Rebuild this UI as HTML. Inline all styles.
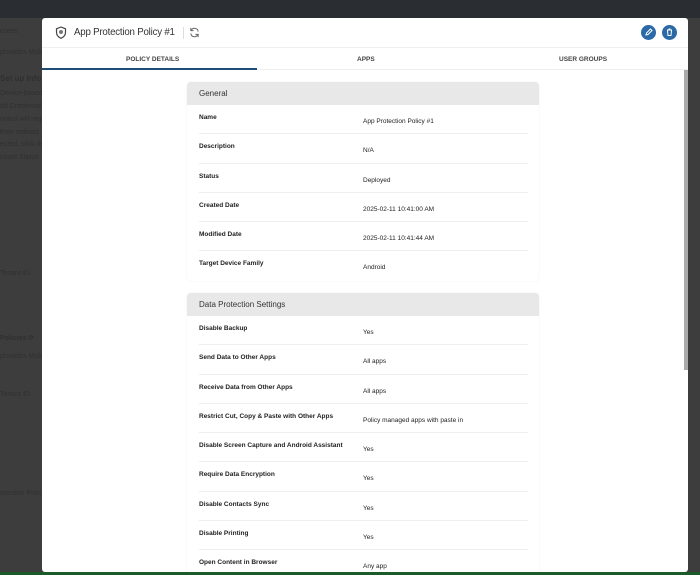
<!DOCTYPE html>
<html><head><meta charset="utf-8"><style>
*{margin:0;padding:0;box-sizing:border-box}
body{width:700px;height:575px;overflow:hidden;background:#3d3d3d;font-family:"Liberation Sans",sans-serif;position:relative}
.top{position:absolute;left:0;top:0;width:700px;height:18px;background:#2a2e32}
.green{position:absolute;left:0;top:572px;width:700px;height:3px;background:#1d5a2b}
.bg{position:absolute;color:#303030;font-size:7px;left:0}
.modal{position:absolute;left:42px;top:18px;width:646px;height:554px;background:#fff;border-radius:3px;overflow:hidden}
.hdr{height:30px;border-bottom:1px solid #eee;position:relative}
.title{position:absolute;left:32px;top:9px;font-size:9.7px;letter-spacing:-0.2px;color:#333}
.tabs{height:22px;border-bottom:1px solid #eee;position:relative;font-size:6.5px;font-weight:bold;color:#444}
.tabs span{position:absolute;top:8px}
.ul{position:absolute;left:0;top:20px;width:215px;height:2px;background:#1f4e79}
.sb{position:absolute;left:642px;top:52px;width:4px;height:300px;background:#aaa}
.card{position:absolute;left:145px;width:352px;border-radius:4px;background:#fff;box-shadow:0 0 1px #ddd}
.ch{height:23px;background:#e8e8e8;border-radius:4px 4px 0 0;font-size:8px;color:#333;padding:7px 0 0 12px}
.row{height:29.3px;margin:0 11px 0 12px;border-bottom:1px solid #eee;position:relative;font-size:6.5px;color:#222}
.row b{position:absolute;left:0;top:9px}
.row i{font-style:normal;position:absolute;left:164px;top:13px}
.ic{position:absolute;top:7px;width:15px;height:15px;border-radius:50%;background:#2b6aa6}
</style></head><body>
<div class="top"></div>
<div class="bg" style="top:28px">ccess</div>
<div class="bg" style="top:49px">provides Mob</div>
<div class="bg" style="top:74px;font-weight:bold;font-size:8px">Set up Infor</div>
<div class="bg" style="top:90px">Device-based</div>
<div class="bg" style="top:103px">dd Credentials</div>
<div class="bg" style="top:116px">ontrol will requ</div>
<div class="bg" style="top:129px">then redirect</div>
<div class="bg" style="top:141px">ected, click th</div>
<div class="bg" style="top:154px">count Status</div>
<div class="bg" style="top:270px">Tenant ID</div>
<div class="bg" style="top:334px;font-weight:bold">Policies ⟳</div>
<div class="bg" style="top:353px">provides Mob</div>
<div class="bg" style="top:391px">Tenant ID</div>
<div class="bg" style="top:490px">otection Polic</div>
<div class="green"></div>
<div class="modal">
 <div class="hdr">
  <svg style="position:absolute;left:13px;top:8px" width="12" height="13" viewBox="0 0 12 13"><path d="M6 1L1.5 2.8v3.5c0 3 2 5 4.5 6 2.5-1 4.5-3 4.5-6V2.8z" fill="none" stroke="#444" stroke-width="1.2"/><circle cx="6" cy="6" r="2" fill="#777"/></svg>
  <div class="title">App Protection Policy #1</div>
  <div style="position:absolute;left:141px;top:9px;width:1px;height:12px;background:#ddd"></div>
  <svg style="position:absolute;left:147px;top:9px" width="11" height="11" viewBox="0 0 12 12"><path d="M10 5A4 4 0 0 0 2.5 3.5M2 7a4 4 0 0 0 7.5 1.5" fill="none" stroke="#666" stroke-width="1.1"/><path d="M2 1v3h3M10 11V8H7" fill="none" stroke="#666" stroke-width="1.1"/></svg>
  <div class="ic" style="left:599px"><svg width="15" height="15" viewBox="0 0 15 15"><path d="M5 10l.5-2 4-4 1.5 1.5-4 4z" fill="none" stroke="#fff" stroke-width="1"/></svg></div>
  <div class="ic" style="left:620px"><svg width="15" height="15" viewBox="0 0 15 15"><path d="M5 5h5M5.5 5.5l.5 5h3l.5-5M6.5 4h2" fill="none" stroke="#fff" stroke-width="1"/></svg></div>
 </div>
 <div class="tabs">
  <span style="left:84px">POLICY DETAILS</span><span style="left:315px">APPS</span><span style="left:517px">USER GROUPS</span>
  <div class="ul"></div>
 </div>
 <div class="sb"></div>
 <div class="card" style="top:64px">
  <div class="ch">General</div>
  <div class="row"><b>Name</b><i>App Protection Policy #1</i></div>
  <div class="row"><b>Description</b><i>N/A</i></div>
  <div class="row"><b>Status</b><i>Deployed</i></div>
  <div class="row"><b>Created Date</b><i>2025-02-11 10:41:00 AM</i></div>
  <div class="row"><b>Modified Date</b><i>2025-02-11 10:41:44 AM</i></div>
  <div class="row" style="border:0"><b>Target Device Family</b><i>Android</i></div>
 </div>
 <div class="card" style="top:275px">
  <div class="ch">Data Protection Settings</div>
  <div class="row"><b>Disable Backup</b><i>Yes</i></div>
  <div class="row"><b>Send Data to Other Apps</b><i>All apps</i></div>
  <div class="row"><b>Receive Data from Other Apps</b><i>All apps</i></div>
  <div class="row"><b>Restrict Cut, Copy &amp; Paste with Other Apps</b><i>Policy managed apps with paste in</i></div>
  <div class="row"><b>Disable Screen Capture and Android Assistant</b><i>Yes</i></div>
  <div class="row"><b>Require Data Encryption</b><i>Yes</i></div>
  <div class="row"><b>Disable Contacts Sync</b><i>Yes</i></div>
  <div class="row"><b>Disable Printing</b><i>Yes</i></div>
  <div class="row"><b>Open Content in Browser</b><i>Any app</i></div>
 </div>
</div>
</body></html>
